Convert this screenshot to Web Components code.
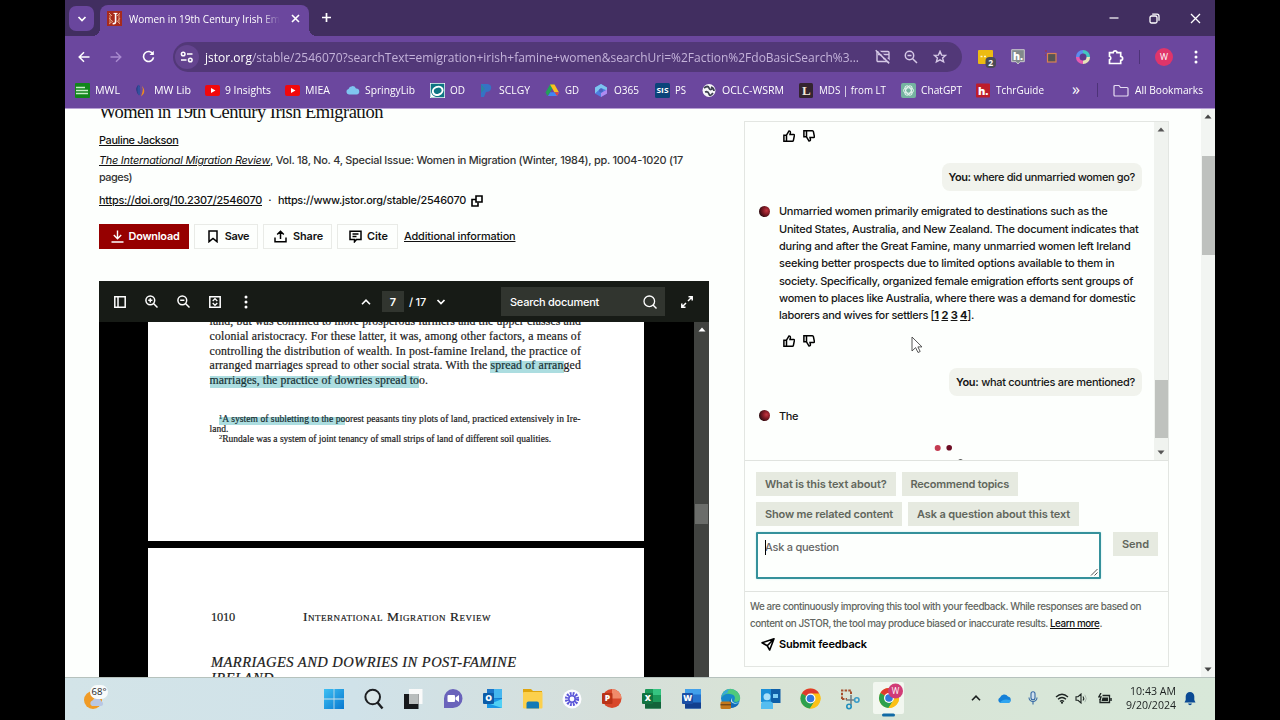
<!DOCTYPE html>
<html lang="en">
<head>
<meta charset="utf-8">
<title>Women in 19th Century Irish Emigration</title>
<style>
    body {
        margin: 0;
        background: #000;
        width: 1280px;
        height: 720px;
        overflow: hidden;
        display: flex;
        justify-content: center;
    }
</style>
</head>
<body>
<app-window></app-window>

<script>
const UI_FONT = `"Open Sans", "Noto Sans", sans-serif`;
const PAGE_FONT = `Inter, "Liberation Sans", sans-serif`;
const SERIF_FONT = `"Liberation Serif", serif`;

const CHROME_LOGO = `
    <circle cx="10.5" cy="10.5" r="10" fill="#fbc116"/>
    <path d="M10.5 10.5L1.8 5.5A10 10 0 0 1 19.2 5.5z" fill="#df3a2e"/>
    <path d="M10.5 10.5L1.8 5.5A10 10 0 0 0 10 20.5L14.8 13z" fill="#2da04e"/>
    <path d="M10.5 5.5H19.2A10 10 0 0 1 10 20.5L14.8 13z" fill="#fbc116"/>
    <circle cx="10.5" cy="10.5" r="5" fill="#fff"/>
    <circle cx="10.5" cy="10.5" r="3.8" fill="#3277dd"/>`;

// name: [width, height, markup]
const ICONS = {
    chevron: [10, 6, `<path d="M1.5 1L5 4.6 8.5 1" fill="none" stroke="currentColor" stroke-width="1.7"/>`],
    caretUp: [10, 6, `<path d="M1 5.2L5 1.2 9 5.2" fill="none" stroke="currentColor" stroke-width="1.6"/>`],
    arrowUp: [8, 5, `<path d="M4 0.5L7.5 4.5H0.5z" fill="currentColor"/>`],
    arrowDown: [8, 5, `<path d="M4 4.5L7.5 0.5H0.5z" fill="currentColor"/>`],
    close: [9, 9, `<path d="M1 1l7 7M8 1L1 8" stroke="#fff" stroke-width="1.6"/>`],
    winClose: [11, 11, `<path d="M1 1l9 9M10 1L1 10" stroke="#fff" stroke-width="1.3"/>`],
    plus: [11, 11, `<path d="M5.5 1v9M1 5.5h9" stroke="#fff" stroke-width="1.7"/>`],
    minimize: [10, 2, `<path d="M0.5 1h9" stroke="#fff" stroke-width="1.2"/>`],
    restore: [11, 11, `<rect x="1" y="3" width="7" height="7" rx="1.5" fill="none" stroke="#fff" stroke-width="1.3"/><path d="M3.2 1.2H8A2 2 0 0 1 10 3.2V7.8" fill="none" stroke="#fff" stroke-width="1.3"/>`],
    jstor: [15, 15, `<rect width="15" height="15" fill="#a72a1c"/><path d="M2 2l3 3M2 7l3 3M2 13l4-3M13 2l-3 3M13 7l-3 4M13 13l-2-2M3 4v8M12 3v9" stroke="#e0a080" stroke-width="1"/><path d="M8.6 2v8.5q0 2.5-3 2" fill="none" stroke="#fff" stroke-width="1.6"/><path d="M6.5 2.4h4" stroke="#fff"/>`],
    back: [12, 12, `<path d="M11.5 6H1.5M6 1.2L1.2 6 6 10.8" fill="none" stroke="#fff" stroke-width="1.5"/>`],
    forward: [12, 12, `<path d="M0.5 6H10.5M6 1.2L10.8 6 6 10.8" fill="none" stroke="#a98bd0" stroke-width="1.4"/>`],
    reload: [13, 13, `<path d="M11 4.2A5 5 0 1 0 11.5 7.3" fill="none" stroke="#fff" stroke-width="1.6"/><path d="M11.8 0.8V5H7.5z" fill="#fff"/>`],
    tune: [14, 12, `<g fill="none" stroke="#fff" stroke-width="1.5"><circle cx="3.2" cy="3" r="1.8"/><path d="M7 3h5.5M1 9h5.5"/><circle cx="10.3" cy="9" r="1.8"/></g>`],
    noCard: [16, 15, `<g fill="none" stroke="#d5c8e6" stroke-width="1.4"><rect x="2" y="2.5" width="12" height="10" rx="1"/><path d="M3 5.5h11M8 9.5h6"/></g><path d="M2 0l13.5 13.5" stroke="#523878" stroke-width="1.6"/><path d="M0.7 1.2l13.5 13.2" stroke="#d5c8e6" stroke-width="1.5"/>`],
    zoomMinus: [14, 14, `<g fill="none" stroke="#d5c8e6" stroke-width="1.5"><circle cx="5.5" cy="5.5" r="4.2"/><path d="M8.7 8.7l4.3 4.3M3.5 5.5h4"/></g>`],
    star: [14, 14, `<path d="M7 1.4l1.6 3.7 4 .3-3 2.6 1 3.9L7 9.8l-3.6 2.1 1-3.9-3-2.6 4-.3z" fill="none" stroke="#d5c8e6" stroke-width="1.4"/>`],
    noteExt: [18, 20, `<rect x="0" y="2" width="15" height="14" rx="1" fill="#edbb12"/><path d="M2.5 8.5h2M6 8.500h2" stroke="#fff5c0" stroke-width="1.5"/><rect x="7.5" y="9" width="10.5" height="11" rx="4" fill="#4a4a55"/><text x="10.2" y="18" font-size="8.5" font-weight="700" fill="#fff">2</text>`],
    hExt: [14, 16, `<path d="M0.7 0.7h12.6v12H9L7 15l-2-2.3H0.7z" fill="#828a8c" stroke="#c9c9cc" stroke-width="1"/><text x="2" y="10.5" font-size="10.5" font-weight="800" fill="#fff">h.</text>`],
    squareExt: [12, 13, `<rect x="2.5" y="3.5" width="8.5" height="8.5" fill="#555" stroke="#d98252" stroke-width="1.2"/><path d="M0 1h2M0 4v2" stroke="#b0342f"/>`],
    ringExt: [16, 16, `<g fill="none" stroke-width="3.6"><path d="M8 2.700A5.300 5.300 0 0 1 13.3 8" stroke="#42c6c0"/><path d="M13.3 8A5.3 5.3 0 0 1 8 13.3" stroke="#e8e3b8"/><path d="M8 13.3A5.3 5.3 0 0 1 2.7 8" stroke="#e55bb0"/><path d="M2.7 8A5.3 5.3 0 0 1 8 2.7" stroke="#5c8cf0"/></g><circle cx="8" cy="8" r="3.2" fill="#5b3a8c"/>`],
    puzzle: [16, 16, `<path d="M1.5 3.7h3.7a1.9 1.9 0 0 1 3.8 0h3.7v3.8a1.9 1.9 0 0 1 0 3.8v3.2H1.5v-3.6a1.9 1.9 0 0 0 0-3.6z" fill="none" stroke="#fff" stroke-width="1.7"/>`],
    userW: [18, 18, `<circle cx="9" cy="9" r="9" fill="#e0356a"/><text x="5" y="12.4" font-size="9" fill="#fff" textLength="8" lengthAdjust="spacingAndGlyphs">W</text>`],
    dots: [4, 14, `<g fill="currentColor"><circle cx="2" cy="2" r="1.5"/><circle cx="2" cy="7" r="1.5"/><circle cx="2" cy="12" r="1.5"/></g>`],

    // bookmarks
    mwl: [15, 15, `<rect width="15" height="15" rx="1" fill="#11851b"/><path d="M1 4.5h9M1 7.5h12M1 10.5h12" stroke="#c5eec5" stroke-width="1.5"/>`],
    mwlib: [15, 15, `<path d="M4 2Q0 7 5 12.5Q3 7 6 3z" fill="#283a80"/><path d="M4.500 1.500Q7 5 6 12.500L4 11Q2.500 6 4.500 1.500z" fill="#33509e"/><path d="M6 1Q11 4 7 13.500Q14 8 6 1z" fill="#ed8b20"/>`],
    youtube: [15, 15, `<rect y="2" width="15" height="11" rx="2" fill="#f1080c"/><path d="M6 5l4.5 2.5L6 10z" fill="#fff"/>`],
    cloud: [15, 15, `<path d="M4 11.5a2.8 2.8 0 0 1-.5-5.5 4 4 0 0 1 7.5-.5 3 3 0 0 1 .5 6z" fill="#7fc5f0"/>`],
    od: [15, 15, `<rect width="15" height="15" fill="#fff"/><rect x="0.7" y="0.7" width="13.600" height="13.600" fill="#0e7583"/><path d="M1 14V9q1 4 5 5z" fill="#fff"/><ellipse cx="7.7" cy="7.8" rx="5" ry="4" fill="none" stroke="#fff" stroke-width="2" transform="rotate(-22 7.700 7.800)"/>`],
    pear: [15, 15, `<path d="M2 1h7q4 1 3 5-1 3-5 3L5 14H2z" fill="#3573c4"/><path d="M2 1l4 5-4 4z" fill="#2a83a5"/>`],
    drive: [15, 15, `<path d="M5 1.5h4.5L5 9.5 2.5 13 0.5 9.500z" fill="#22a05a"/><path d="M5 1.5h4.5L14 9.5H9.5z" fill="#fbc11c"/><path d="M3 13l2.3-3.8h9L12 13z" fill="#4285f4"/><path d="M9.5 9.2h4.7L12 13z" fill="#e6453a"/>`],
    o365: [15, 15, `<path d="M7 1l6 3.5v6L7 14l-6-3.5v-6z" fill="#4d7de0"/><path d="M7 1l6 3.5v3L7 5 1 10.5v-6z" fill="#7dc4ee"/><path d="M7 14l6-3.5v-4L7 10z" fill="#b08af0"/><circle cx="7" cy="7.5" r="2" fill="#4a62c0"/>`],
    sis: [15, 15, `<rect width="15" height="15" rx="1.5" fill="#0b447a"/><text x="1.5" y="10.4" font-size="7.5" font-weight="700" fill="#fff" textLength="12" lengthAdjust="spacingAndGlyphs">SIS</text>`],
    globe: [15, 15, `<circle cx="7" cy="7.5" r="6.5" fill="#f6f6f8"/><path d="M2 5q4-3 5 0t4 0M3 9q3-1 4 2t4-1M9 4q3 1 3 4" fill="none" stroke="#3d4150" stroke-width="1.8"/>`],
    lt: [15, 15, `<rect width="14" height="15" rx="1.5" fill="#33242f"/><text x="3" y="12.3" font-family="Liberation Serif" font-size="13" font-weight="700" fill="#f3ead8">L</text>`],
    gpt: [15, 15, `<rect width="15" height="15" rx="2" fill="#75b3a0"/><g fill="none" stroke="#e6f5f0" stroke-width="1"><ellipse cx="7.5" cy="7.5" rx="5" ry="2.7"/><ellipse cx="7.5" cy="7.5" rx="5" ry="2.7" transform="rotate(60 7.5 7.5)"/><ellipse cx="7.5" cy="7.5" rx="5" ry="2.7" transform="rotate(120 7.5 7.5)"/></g>`],
    hRed: [15, 15, `<rect width="14" height="14" y="0.5" rx="1" fill="#bd1c2b"/><text x="2" y="11.7" font-size="11" font-weight="800" fill="#fff">h.</text>`],
    folder: [16, 13, `<path d="M1 2.5a1 1 0 0 1 1-1h4l1.5 2H14a1 1 0 0 1 1 1V11a1 1 0 0 1-1 1H2a1 1 0 0 1-1-1z" fill="none" stroke="#e6dcf2" stroke-width="1.2"/>`],

    // article and viewer
    copy: [12, 12, `<g fill="none" stroke="#000" stroke-width="1.6"><path d="M5 1h6v6H5z"/><path d="M5 4.5H1V11h6V7.5"/></g>`],
    download: [13, 13, `<path d="M6.5 0.5v8M2.8 5l3.7 3.7L10.2 5M0.5 12h12" fill="none" stroke="#fff" stroke-width="1.4"/>`],
    save: [10, 13, `<path d="M1 1h8v10.7L5 8.4 1 11.7z" fill="none" stroke="#000" stroke-width="1.5"/>`],
    share: [13, 13, `<path d="M6.5 9V1.5M3.2 4.5l3.3-3.3 3.3 3.3M1 7.5v4.3h11V7.5" fill="none" stroke="#000" stroke-width="1.5"/>`],
    cite: [13, 13, `<path d="M1 1.200h11v8.300H7.5L5.5 11.8V9.5H1zM3.5 4h6M3.5 6.5h4" fill="none" stroke="#000" stroke-width="1.5"/>`],
    sidebar: [12, 12, `<path d="M0.8 0.8h10.4v10.4H0.8zM4 1v10" fill="none" stroke="#fff" stroke-width="1.5"/>`],
    zoomIn: [13, 13, `<g fill="none" stroke="#fff" stroke-width="1.5"><circle cx="5.3" cy="5.3" r="4.4"/><path d="M8.5 8.5L12.5 12.5M3.2 5.3h4.2M5.3 3.2v4.2"/></g>`],
    zoomOut: [13, 13, `<g fill="none" stroke="#fff" stroke-width="1.5"><circle cx="5.3" cy="5.3" r="4.4"/><path d="M8.5 8.5L12.5 12.5M3.2 5.3h4.2"/></g>`],
    fitPage: [12, 12, `<path d="M0.8 0.8h10.4v10.4H0.8z" fill="none" stroke="#fff" stroke-width="1.5"/><path d="M3.7 5L6 2.7 8.3 5M3.7 7L6 9.3 8.3 7" fill="none" stroke="#fff" stroke-width="1.3"/>`],
    search: [14, 14, `<circle cx="6.3" cy="6.3" r="5.3" fill="none" stroke="#fff" stroke-width="1.3"/><path d="M10 10l3.5 3.5" stroke="#fff" stroke-width="1.4"/>`],
    expand: [12, 12, `<path d="M7.5 0.8h3.7v3.7M11 1L7 5M4.5 11.2H0.8V7.5M1 11l4-4" fill="none" stroke="#fff" stroke-width="1.5"/>`],

    // chat
    thumbUp: [12, 12, `<path d="M3.5 5.2L6 0.9q1.6 0 1.4 1.8L7 4.6h3.9q.6 0 .5.8L10.4 10.3q-.2.9-1 .9H3.5zM3.5 5.2H0.9v6h2.6z" fill="none" stroke="#000" stroke-width="1.5"/>`],
    thumbDown: [12, 12, `<path d="M3.5 6.8L6 11.1q1.6 0 1.4-1.8L7 7.4h3.9q.6 0 .5-.8L10.4 1.7q-.2-.9-1-.9H3.5zM3.5 6.8H0.9v-6h2.6z" fill="none" stroke="#000" stroke-width="1.5"/>`],
    send: [14, 13, `<path d="M1 4.8L13 0.8 8.7 12 6.3 7.8z M6.3 7.8L13 0.8" fill="none" stroke="#000" stroke-width="1.6" stroke-linejoin="round"/>`],
    spinner: [30, 15, `<circle cx="3.7" cy="3" r="3" fill="#c43c51"/><circle cx="15.2" cy="2.8" r="2.8" fill="#6d0d24"/><circle cx="26.5" cy="17.3" r="3" fill="#222"/>`],
    pointer: [13, 18, `<path d="M1 1v14l3.6-3.4L7 16.5l2.2-1-2.3-4.6H11z" fill="#fff" stroke="#444" stroke-width="0.9"/>`],

    // taskbar
    weather: [28, 26, `<circle cx="11" cy="15" r="9" fill="#f09b26"/><path d="M10 21a3 3 0 0 1 .5-5.6 5 5 0 0 1 9 1.1 2.3 2.3 0 0 1-.5 4.5z" fill="#b9c7e4"/><rect x="8" y="0" width="18" height="14" rx="7" fill="#f8fbfb"/><text x="9.5" y="10.3" font-size="9.5" fill="#222" textLength="15" lengthAdjust="spacingAndGlyphs">68°</text>`],
    windows: [22, 22, `<linearGradient id="w" x2="1" y2="1"><stop stop-color="#3ec0f3"/><stop offset="1" stop-color="#0878d0"/></linearGradient><path d="M1 1h9.6v9.6H1zM11.4 1H21v9.6h-9.6zM1 11.4h9.6V21H1zM11.4 11.4H21V21h-9.6z" fill="url(#w)"/>`],
    taskSearch: [20, 22, `<circle cx="8.7" cy="9" r="7.3" fill="#dbe7e9" stroke="#1d1f22" stroke-width="2"/><path d="M13.5 14.5L18.5 20.5" stroke="#1d1f22" stroke-width="2.4"/>`],
    taskView: [20, 22, `<rect x="6" y="1" width="13.5" height="15" fill="#fafafa"/><rect x="1" y="6" width="14.5" height="15" fill="#17191c"/><rect x="6" y="6" width="9.5" height="10" fill="#b9bdbd"/>`],
    meet: [20, 21, `<path d="M10 1a9.3 9.3 0 0 1 0 19H1V10.5A9.3 9.3 0 0 1 10 1z" fill="#6a63bb"/><rect x="4.5" y="7" width="7.5" height="7" rx="1" fill="#fff"/><path d="M12.5 9.5l3.5-2.5v7l-3.5-2.5z" fill="#fff"/>`],
    outlook: [21, 21, `<rect x="5" y="1" width="15" height="11" fill="#1b75c9"/><rect x="12" y="1" width="8" height="9" fill="#45b6ef"/><path d="M5 10l15 1v9H5z" fill="#1997e6"/><path d="M20 11v9l-12-4z" fill="#50d0f5"/><rect x="1" y="5" width="11" height="11" rx="1" fill="#0c5ca8"/><text x="3.3" y="13.4" font-size="8.5" font-weight="800" fill="#fff">O</text>`],
    explorer: [21, 21, `<path d="M1 1h8l2 2h9v6H1z" fill="#e0a50c"/><rect x="1" y="4" width="19.5" height="16.5" rx="1" fill="#fcd04d"/><path d="M4.5 20.5V15.5q0-2 2-2h8.5q2 0 2 2v5z" fill="#1379b6"/>`],
    loom: [20, 20, `<circle cx="10" cy="10" r="9.5" fill="#fcfcff"/><circle cx="10" cy="10" r="5.3" fill="none" stroke="#5a55d8" stroke-width="3.6" stroke-dasharray="1.7 1.075"/><circle cx="10" cy="10" r="3.2" fill="none" stroke="#5a55d8" stroke-width="1.6"/>`],
    ppt: [21, 21, `<circle cx="11" cy="10.5" r="9.5" fill="#d8472a"/><path d="M11 1a9.5 9.5 0 0 1 9.5 9.5H11z" fill="#f08a6a"/><rect x="1" y="5" width="10.5" height="11" rx="1" fill="#b93318"/><text x="3.7" y="13.3" font-size="8.5" font-weight="800" fill="#fff">P</text>`],
    excel: [21, 21, `<rect x="4" y="1" width="16" height="19.5" rx="1" fill="#1b9a5a"/><rect x="12" y="1" width="8" height="6" fill="#35c481"/><rect x="4" y="14" width="16" height="6.5" fill="#12633a"/><rect x="1" y="5" width="11" height="11" rx="1" fill="#107340"/><text x="3.7" y="13.3" font-size="8.5" font-weight="800" fill="#fff">X</text>`],
    word: [21, 21, `<rect x="4" y="1" width="16" height="19.5" rx="1" fill="#2472cc"/><rect x="4" y="1" width="16" height="5.5" fill="#41a0ea"/><rect x="4" y="14.5" width="16" height="6" fill="#123f8e"/><rect x="1" y="5" width="11" height="11" rx="1" fill="#1a4fa5"/><text x="2.3" y="13.3" font-size="8.5" font-weight="800" fill="#fff">W</text>`],
    edge: [21, 22, `<circle cx="10.5" cy="10.5" r="9.5" fill="#1587ca"/><path d="M3 4Q10 -2 17 3.500 21 7 20 11.500 18 15 14 13.500 17 7 10 6 5 5 2 9z" fill="#4fc97c"/><path d="M1.500 8Q4 1 10.500 1q-3 1-3 4Q4 6 1.500 8z" fill="#36a8dc"/><path d="M11 10q-1 5 4 6.500 3 0 4.500-2Q17 19.500 11 20q-4-5 0-10z" fill="#1568b8"/><path d="M12.500 9.500q-2 3 1 5 3 1.500 6.500-1-3 3-7 1.500-4-2-.5-5.500z" fill="#e7f1ec"/><rect x="0.5" y="13.5" width="10.5" height="7.5" rx="1.5" fill="#c4781c"/><path d="M0.5 16.8h10.5" stroke="#55351a"/>`],
    people: [21, 21, `<rect x="1" y="1" width="13" height="13" fill="#1a8fd8"/><rect x="11" y="1" width="9.5" height="14" fill="#0e5fa8"/><rect x="13" y="6" width="5" height="4" fill="#7fd0f5"/><circle cx="7" cy="8.7" r="3.5" fill="#a7e0fa"/><path d="M1 21v-4.5q0-3 3-3h6q3 0 3 3V21z" fill="#54bdf0"/>`],
    chrome: [21, 21, CHROME_LOGO],
    snip: [21, 22, `<path d="M3 11V2.5h9V7" fill="none" stroke="#a6502e" stroke-width="2" stroke-dasharray="2.5 1.2"/><path d="M3 11h5" stroke="#a6502e" stroke-width="2" stroke-dasharray="2.5 1.2"/><path d="M12 7v10M7 12h9" stroke="#6f7d84" stroke-width="1.5"/><circle cx="10" cy="18.5" r="2.2" fill="none" stroke="#2190bd" stroke-width="1.6"/><circle cx="17.8" cy="12" r="2.2" fill="none" stroke="#3a9cc8" stroke-width="1.6"/>`],
    chromeActive: [34, 35, `<rect width="31" height="32" rx="2" fill="#f2f7f0"/><g transform="translate(5.5 5.5)">${CHROME_LOGO}</g><circle cx="22.5" cy="9" r="7.5" fill="#d13b76"/><text x="18.8" y="12.2" font-size="8.5" fill="#fff" textLength="7.5" lengthAdjust="spacingAndGlyphs">W</text><rect x="9" y="31.5" width="13" height="3" rx="1.5" fill="#116aa5"/>`],
    onedrive: [14, 11, `<path d="M3.5 10a3 3 0 0 1-.5-5.6A4.5 4.5 0 0 1 11 3.5 3.3 3.3 0 0 1 11 10z" fill="#1580d8"/><path d="M3 10Q5 5 13.5 7 13.5 10 11 10z" fill="#2fa5f0"/>`],
    mic: [10, 14, `<rect x="3" y="0.7" width="4" height="8" rx="2" fill="#cfe0ee" stroke="#3568a5" stroke-width="1.1"/><path d="M1 6.5a4 4 0 0 0 8 0M5 10.5V13.5" fill="none" stroke="#3568a5" stroke-width="1.1"/>`],
    wifi: [14, 11, `<g fill="none" stroke="#1d2422" stroke-width="1.3"><path d="M1 4q6-5.5 12 0M3 6.3q4-3.7 8 0M5 8.5q2-1.8 4 0"/></g><circle cx="7" cy="9.7" r="1.1" fill="#1d2422"/>`],
    sound: [12, 11, `<path d="M1 3.7h2L6 1v9L3 7.3H1z" fill="none" stroke="#1d2422" stroke-width="1.1"/><path d="M8 3.5q1.5 2 0 4" fill="none" stroke="#1d2422" stroke-width="1.1"/><path d="M9.8 1.8q3 3.7 0 7.4" fill="none" stroke="#a9b8ae" stroke-width="1"/>`],
    battery: [14, 11, `<path d="M4.500 2.500H11.500V9.500H2V6" fill="none" stroke="#1d2422" stroke-width="1.300"/><path d="M4.500 4.500h5.500v3.500H3.500z" fill="#1d2422"/><path d="M13 5v3" stroke="#1d2422" stroke-width="1.500"/><path d="M3 0L0.800 3.800H3L2 7" fill="none" stroke="#1d2422" stroke-width="1.300"/>`],
    bell: [12, 15, `<path d="M6 1a4.3 4.3 0 0 1 4.3 4.3V9L11.5 11.5H0.5L1.7 9V5.3A4.3 4.3 0 0 1 6 1z" fill="#0b4a94"/><path d="M4 12.5h4q-.5 1.7-2 1.7t-2-1.7z" fill="#0b4a94"/>`]
};

class UiIcon extends HTMLElement {
    connectedCallback() {
        const [w, h, markup] = ICONS[this.getAttribute('name')];
        this.attachShadow({ mode: 'open' }).innerHTML = `
            <style>
                :host { display: inline-flex; flex: none; font-family: ${UI_FONT}; letter-spacing: 0; }
                svg { display: block; }
            </style>
            <svg width="${w}" height="${h}" viewBox="0 0 ${w} ${h}">${markup}</svg>
        `;
    }
}

// One line of text fitted to the width in px given by "w".
// Spacing is used by default, "squeeze" scales the glyphs instead.
class FitLine extends HTMLElement {
    connectedCallback() {
        const root = this.attachShadow({ mode: 'open' });
        root.innerHTML = `
            <style>
                :host { display: inline-block; flex: none; white-space: nowrap; vertical-align: top; }
                span { display: inline-block; transform-origin: 0 50%; }
            </style>
            <span><slot></slot></span>
        `;
        const target = Number(this.getAttribute('w'));
        const span = root.querySelector('span');
        const natural = span.getBoundingClientRect().width;
        if (this.hasAttribute('squeeze')) {
            span.style.transform = `scaleX(${target / natural})`;
        } else {
            const count = this.textContent.trim().length;
            span.style.letterSpacing = `${(target - natural) / count}px`;
        }
        this.style.width = `${target}px`;
    }
}

// Base for the elements that only draw static markup
class ViewElement extends HTMLElement {
    connectedCallback() {
        this.attachShadow({ mode: 'open' });
        this.shadowRoot.innerHTML = `<style>${this.styles()}</style>${this.markup()}`;
    }
}

class AppWindow extends ViewElement {
    styles() {
        return `
            :host { display: flex; flex-direction: column; width: 1150px; height: 720px; background: #fdfffd; overflow: hidden; }
            main { height: 568px; display: flex; overflow: hidden; }
            article { width: 610px; margin-left: 34px; }
            chat-panel { margin: 12px 32px 0 35px; }
        `;
    }
    markup() {
        return `
            <browser-tabs></browser-tabs>
            <browser-toolbar></browser-toolbar>
            <bookmark-bar></bookmark-bar>
            <main>
                <article>
                    <article-header></article-header>
                    <pdf-viewer></pdf-viewer>
                </article>
                <chat-panel></chat-panel>
                <scroll-track start="47" size="99" style="--track:#f2f5f2;--thumb:#bec1be;--arrow:#444"></scroll-track>
            </main>
            <task-bar></task-bar>
        `;
    }
}

class ScrollTrack extends ViewElement {
    styles() {
        return `
            :host { display: flex; flex-direction: column; align-items: center; flex: none; width: 14px; box-sizing: border-box; padding: 5px 0; background: var(--track); color: var(--arrow); }
            i { flex: none; width: 13px; height: ${this.getAttribute('size')}px; margin-top: ${this.getAttribute('start') - 10}px; background: var(--thumb); }
            .end { margin-top: auto; }
        `;
    }
    markup() {
        return `
            <ui-icon name="arrowUp"></ui-icon>
            <i></i>
            ${this.hasAttribute('noend') ? '' : '<ui-icon class="end" name="arrowDown"></ui-icon>'}
        `;
    }
}

class BrowserTabs extends ViewElement {
    styles() {
        return `
            :host { display: flex; align-items: flex-start; height: 36px; background: #412e60; color: #fff; font: 11.4px/16px ${UI_FONT}; }
            .find { width: 25px; height: 25px; margin: 6px 6px 0 4px; border-radius: 7px; background: #69469d; display: flex; align-items: center; justify-content: center; }
            .tab { position: relative; display: flex; align-items: center; width: 209px; height: 31px; margin-top: 5px; box-sizing: border-box; padding: 0 10px 4px 7px; background: #6b479e; border-radius: 8px 8px 0 0; }
            .tab::before, .tab::after { content: ""; position: absolute; bottom: 0; width: 8px; height: 8px; }
            .tab::before { left: -8px; background: radial-gradient(circle at 0 0, transparent 8px, #6b479e 8px); }
            .tab::after { right: -8px; background: radial-gradient(circle at 100% 0, transparent 8px, #6b479e 8px); }
            .name { width: 151px; margin: 1px 11px 0 7px; -webkit-mask-image: linear-gradient(90deg, #000 132px, transparent 151px); mask-image: linear-gradient(90deg, #000 132px, transparent 151px); display: flex; }
            .plus { margin: 12px auto 0 12px; }
            .controls { display: flex; align-items: center; gap: 30px; height: 36px; padding-right: 14px; }
        `;
    }
    markup() {
        return `
            <div class="find"><ui-icon name="chevron"></ui-icon></div>
            <div class="tab">
                <ui-icon name="jstor"></ui-icon>
                <div class="name"><fit-line w="151" squeeze>Women in 19th Century Irish Em</fit-line></div>
                <ui-icon name="close"></ui-icon>
            </div>
            <ui-icon class="plus" name="plus"></ui-icon>
            <div class="controls">
                <ui-icon name="minimize"></ui-icon>
                <ui-icon name="restore"></ui-icon>
                <ui-icon name="winClose"></ui-icon>
            </div>
        `;
    }
}

class BrowserToolbar extends ViewElement {
    styles() {
        return `
            :host { display: grid; grid-template-columns: 38px 25px 45px 789px 40px 32px 33px 32px 34px 12px 38px 26px; align-items: center; justify-items: center; height: 41px; background: #6b479e; color: #fff; font: 13px/20px ${UI_FONT}; }
            .reload { margin-right: 4px; }
            .omnibox { justify-self: stretch; display: flex; align-items: center; height: 30px; border-radius: 15px; background: #523878; padding-left: 2px; }
            .site { width: 24px; height: 24px; border-radius: 50%; background: #64448f; display: flex; align-items: center; justify-content: center; margin-right: 6px; }
            .url { color: #c4b3da; margin-right: 16px; }
            .url b { color: #fff; font-weight: 400; }
            .zoom { margin: 0 15px 0 13px; }
            .note { margin: 3px 0 0 9px; }
            .rule { width: 1px; height: 14px; background: #4d3378; }
        `;
    }
    markup() {
        return `
            <ui-icon name="back"></ui-icon>
            <ui-icon name="forward"></ui-icon>
            <ui-icon class="reload" name="reload"></ui-icon>
            <div class="omnibox">
                <span class="site"><ui-icon name="tune"></ui-icon></span>
                <fit-line class="url" w="654" squeeze><b>jstor.org</b>/stable/2546070?searchText=emigration+irish+famine+women&amp;searchUri=%2Faction%2FdoBasicSearch%3...</fit-line>
                <ui-icon name="noCard"></ui-icon>
                <ui-icon class="zoom" name="zoomMinus"></ui-icon>
                <ui-icon name="star"></ui-icon>
            </div>
            <ui-icon class="note" name="noteExt"></ui-icon>
            <ui-icon name="hExt"></ui-icon>
            <ui-icon name="squareExt"></ui-icon>
            <ui-icon name="ringExt"></ui-icon>
            <ui-icon name="puzzle"></ui-icon>
            <span class="rule"></span>
            <ui-icon name="userW"></ui-icon>
            <ui-icon name="dots"></ui-icon>
        `;
    }
}

class BookmarkBar extends ViewElement {
    // [icon, label, label width, item width]
    get items() {
        return [
            ['mwl', 'MWL', 25, 59], ['mwlib', 'MW Lib', 37, 71], ['youtube', '9 Insights', 46, 80],
            ['youtube', 'MIEA', 25, 60], ['cloud', 'SpringyLib', 50, 85], ['od', 'OD', 15, 49],
            ['pear', 'SCLGY', 31, 66], ['drive', 'GD', 14, 49], ['o365', 'O365', 25, 61],
            ['sis', 'PS', 11, 47], ['globe', 'OCLC-WSRM', 62, 97], ['lt', 'MDS | from LT', 67, 102],
            ['gpt', 'ChatGPT', 41, 75], ['hRed', 'TchrGuide', 48, 96]
        ];
    }
    styles() {
        return `
            :host { display: flex; align-items: center; box-sizing: border-box; height: 32px; padding: 0 0 5px 10px; background: #6b479e; border-bottom: 1px solid #b7a0d4; color: #fff; font: 11.4px/16px ${UI_FONT}; }
            .item { display: flex; align-items: center; gap: 5px; flex: none; }
            .more { font-size: 16px; line-height: 12px; width: 9px; margin-bottom: 3px; }
            .rule { width: 1px; height: 14px; background: #4d3378; margin: 0 15px 0 16px; }
            .all { margin-left: 6px; }
        `;
    }
    markup() {
        return this.items.map(([icon, label, w, total]) => `
            <span class="item" style="width:${total}px"><ui-icon name="${icon}"></ui-icon><fit-line w="${w}" squeeze>${label}</fit-line></span>
        `).join('') + `
            <span class="more">»</span>
            <span class="rule"></span>
            <ui-icon name="folder"></ui-icon>
            <fit-line class="all" w="68" squeeze>All Bookmarks</fit-line>
        `;
    }
}

class ArticleHeader extends ViewElement {
    styles() {
        return `
            :host { display: flow-root; height: 172px; color: #111; font: 450 10.9px/17.4px ${PAGE_FONT}; }
            h1 { margin: -9px 0 0; height: 24px; font: 18.5px/24px ${SERIF_FONT}; }
            div { display: flex; align-items: center; }
            .author { height: 17px; margin-top: 8px; }
            .journal { flex-direction: column; align-items: flex-start; margin-top: 3px; color: #333; }
            .journal u { color: #111; font-style: italic; }
            .links { margin-top: 5px; height: 18px; }
            .links span { width: 16px; text-align: center; }
            .links ui-icon { margin-left: 5px; }
            .actions { margin-top: 14px; height: 25px; }
            .btn { box-sizing: border-box; height: 25px; border: 1px solid #e9ebe7; justify-content: center; font-weight: 600; color: #111; padding: 1px 0 0 2px; }
            .btn + .btn { margin-left: 5px; }
            .primary { background: #960000; border-color: #960000; color: #fff; }
            .more { margin: 1px 0 0 6px; }
        `;
    }
    markup() {
        return `
            <h1><fit-line w="284">Women in 19th Century Irish Emigration</fit-line></h1>
            <div class="author"><fit-line w="79.5"><u>Pauline Jackson</u></fit-line></div>
            <div class="journal">
                <fit-line w="584"><u>The International Migration Review</u>, Vol. 18, No. 4, Special Issue: Women in Migration (Winter, 1984), pp. 1004-1020 (17</fit-line>
                <fit-line w="33">pages)</fit-line>
            </div>
            <div class="links">
                <fit-line w="163"><u>https://doi.org/10.2307/2546070</u></fit-line>
                <span>·</span>
                <fit-line w="188">https://www.jstor.org/stable/2546070</fit-line>
                <ui-icon name="copy"></ui-icon>
            </div>
            <div class="actions">
                <div class="btn primary" style="width:90px;gap:5px"><ui-icon name="download"></ui-icon><fit-line w="51">Download</fit-line></div>
                <div class="btn" style="width:64px;gap:7px;padding-left:5px"><ui-icon name="save"></ui-icon><fit-line w="24.5">Save</fit-line></div>
                <div class="btn" style="width:69px;gap:6px"><ui-icon name="share"></ui-icon><fit-line w="30">Share</fit-line></div>
                <div class="btn" style="width:61px;gap:5px"><ui-icon name="cite"></ui-icon><fit-line w="21">Cite</fit-line></div>
                <fit-line class="more" w="111.5"><u>Additional information</u></fit-line>
            </div>
        `;
    }
}

class PdfViewer extends ViewElement {
    styles() {
        return `
            :host { display: flex; flex-direction: column; height: 396px; background: #000; color: #fff; font: 450 11px/18px ${PAGE_FONT}; }
            .bar { display: flex; align-items: center; flex: none; height: 41px; box-sizing: border-box; padding-left: 15px; background: #171b16; }
            .tools { display: flex; align-items: center; gap: 19px; width: 247px; }
            .tools ui-icon:last-child { margin-left: 4px; }
            .page-no { display: flex; justify-content: center; width: 22px; height: 21px; line-height: 22px; margin: 0 5px 0 11px; background: #31352f; font-weight: 600; }
            .total { font-weight: 500; margin-right: 10px; }
            .search { display: flex; align-items: center; justify-content: space-between; width: 164px; height: 29px; box-sizing: border-box; padding: 0 8px 0 9px; margin: 0 16px 0 55px; background: #31352f; }
            .view { display: flex; flex: 1; min-height: 0; }
            .pages { width: 496px; margin: 0 50px 0 49px; color: #1a1a1a; font-family: ${SERIF_FONT}; overflow: hidden; -webkit-text-stroke: 0.2px #1a1a1a; }
            .sheet { height: 219px; margin-bottom: 7px; background: #fff; box-sizing: border-box; padding-left: 61.5px; overflow: hidden; }
            .sheet + .sheet { padding: 61px 0 0 63px; }
            .para { display: flex; flex-direction: column; font-size: 11.8px; line-height: 14.8px; margin-top: -8px; }
            .notes { display: flex; flex-direction: column; font-size: 9.5px; line-height: 10.3px; margin-top: 26.5px; }
            .notes :nth-child(2) { margin-top: -1px; }
            .indent { margin-left: 9.5px; }
            sup { font-size: 6.5px; line-height: 0; vertical-align: 3px; }
            mark { color: #14383c; background: linear-gradient(transparent 3px, #acdde0 3px); padding-bottom: 1px; }
            .running { display: flex; font-size: 12.4px; line-height: 16px; }
            .running .journal { font-variant: small-caps; font-size: 13.5px; margin-left: 68px; }
            h2 { display: flex; flex-direction: column; margin: 29px 0 0; font: italic 14.5px/16px ${SERIF_FONT}; }
        `;
    }
    markup() {
        return `
            <div class="bar">
                <div class="tools">
                    <ui-icon name="sidebar"></ui-icon>
                    <ui-icon name="zoomIn"></ui-icon>
                    <ui-icon name="zoomOut"></ui-icon>
                    <ui-icon name="fitPage"></ui-icon>
                    <ui-icon name="dots"></ui-icon>
                </div>
                <ui-icon name="caretUp"></ui-icon>
                <span class="page-no">7</span>
                <fit-line class="total" w="17">/ 17</fit-line>
                <ui-icon name="chevron"></ui-icon>
                <div class="search"><fit-line w="89">Search document</fit-line><ui-icon name="search"></ui-icon></div>
                <ui-icon name="expand"></ui-icon>
            </div>
            <div class="view">
                <div class="pages">
                    <div class="sheet">
                        <div class="para">
                            <fit-line w="371.5">land, but was confined to more prosperous farmers and the upper classes and</fit-line>
                            <fit-line w="371.5">colonial aristocracy. For these latter, it was, among other factors, a means of</fit-line>
                            <fit-line w="371.5">controlling the distribution of wealth. In post-famine Ireland, the practice of</fit-line>
                            <fit-line w="371.5">arranged marriages spread to other social strata. With the <mark>spread of arran</mark>ged</fit-line>
                            <fit-line w="218.5"><mark>marriages, the practice of dowries spread to</mark>o.</fit-line>
                        </div>
                        <div class="notes">
                            <fit-line class="indent" w="361.5"><mark><sup>1</sup>A system of subletting to the po</mark>orest peasants tiny plots of land, practiced extensively in Ire-</fit-line>
                            <fit-line w="19">land.</fit-line>
                            <fit-line class="indent" w="332"><sup>2</sup>Rundale was a system of joint tenancy of small strips of land of different soil qualities.</fit-line>
                        </div>
                    </div>
                    <div class="sheet">
                        <div class="running"><fit-line w="24">1010</fit-line><fit-line class="journal" w="188">International Migration Review</fit-line></div>
                        <h2>
                            <fit-line w="305.5">MARRIAGES AND DOWRIES IN POST-FAMINE</fit-line>
                            <fit-line w="63">IRELAND</fit-line>
                        </h2>
                    </div>
                </div>
                <scroll-track noend start="182" size="20" style="--track:#414340;--thumb:#6b6d6a;--arrow:#fff;width:15px"></scroll-track>
            </div>
        `;
    }
}

class ChatBubble extends ViewElement {
    styles() {
        return `
            :host { display: flex; align-items: center; align-self: flex-end; height: 26px; margin-right: 12px; padding: 2px 7px 0; background: #f1f3ed; border-radius: 8px; }
        `;
    }
    markup() {
        return `<slot></slot>`;
    }
}

class ChatAnswer extends ViewElement {
    styles() {
        return `
            :host { display: flex; align-items: flex-start; gap: 9px; padding-left: 14px; }
            .ball { flex: none; width: 11px; height: 11px; margin-top: 2.5px; border-radius: 50%; background: radial-gradient(circle at 68% 42%, #c43540 0, #7a1822 40%, #1a0a0e 85%); }
            .lines { display: flex; flex-direction: column; }
        `;
    }
    markup() {
        return `<span class="ball"></span><div class="lines"><slot></slot></div>`;
    }
}

class ThumbRow extends ViewElement {
    styles() {
        return `:host { display: flex; gap: 8px; padding-left: 38px; }`;
    }
    markup() {
        return `<ui-icon name="thumbUp"></ui-icon><ui-icon name="thumbDown"></ui-icon>`;
    }
}

class ChatPanel extends ViewElement {
    styles() {
        return `
            :host { display: block; width: 425px; height: 546px; box-sizing: border-box; border: 1px solid #e3e6e2; color: #161616; font: 450 11px/17.33px ${PAGE_FONT}; flex: none; }
            .history { position: relative; display: flex; height: 338px; border-bottom: 1px solid #e0e3df; }
            .messages { flex: 1; display: flex; flex-direction: column; overflow: hidden; padding-top: 8px; }
            b { font-weight: 600; }
            a { font-weight: 700; text-decoration: underline; }
            chat-bubble { margin-top: 21px; }
            .first { margin-top: 12.6px; }
            .second { margin-top: 12px; }
            .rate { margin-top: 10.4px; }
            .loading { margin: 20px 0 0 189px; }
            .cursor { position: absolute; left: 166px; top: 214px; }
            .composer { height: 131px; box-sizing: border-box; padding: 11px 0 0 11px; border-bottom: 1px solid #e0e3df; }
            .row { display: flex; gap: 6px; margin-bottom: 6px; }
            .chip { display: flex; align-items: center; height: 22px; padding: 2px 9px 0; background: #e6eae0; color: #61665c; font-weight: 600; }
            .ask { display: flex; gap: 12px; align-items: flex-start; }
            .box { position: relative; box-sizing: border-box; width: 345px; height: 47px; padding: 5px 7px; border: 2px solid #35919b; border-radius: 1px; color: #666; box-shadow: 0 0 2px #bfe9ec; }
            .box i { position: absolute; left: 7px; top: 6px; width: 1px; height: 15px; background: #000; }
            .box svg { position: absolute; right: 1px; bottom: 1px; }
            .note { padding: 6px 0 0 5px; display: flex; flex-direction: column; color: #62665f; font-size: 9.9px; line-height: 17.4px; }
            .note a { font-weight: 500; color: #111; }
            .feedback { display: flex; align-items: center; gap: 4px; margin: 3px 0 0 16px; font-weight: 600; color: #000; }
        `;
    }
    markup() {
        return `
            <div class="history">
                <div class="messages">
                    <thumb-row></thumb-row>
                    <chat-bubble><fit-line w="186.5"><b>You:</b> where did unmarried women go?</fit-line></chat-bubble>
                    <chat-answer class="first">
                        <fit-line w="328.5">Unmarried women primarily emigrated to destinations such as the</fit-line>
                        <fit-line w="359.5">United States, Australia, and New Zealand. The document indicates that</fit-line>
                        <fit-line w="351.5">during and after the Great Famine, many unmarried women left Ireland</fit-line>
                        <fit-line w="335.5">seeking better prospects due to limited options available to them in</fit-line>
                        <fit-line w="354">society. Specifically, organized female emigration efforts sent groups of</fit-line>
                        <fit-line w="356.5">women to places like Australia, where there was a demand for domestic</fit-line>
                        <fit-line w="195">laborers and wives for settlers [<a>1</a> <a>2</a> <a>3</a> <a>4</a>].</fit-line>
                    </chat-answer>
                    <thumb-row class="rate"></thumb-row>
                    <chat-bubble><fit-line w="179"><b>You:</b> what countries are mentioned?</fit-line></chat-bubble>
                    <chat-answer class="second"><fit-line w="19">The</fit-line></chat-answer>
                    <ui-icon class="loading" name="spinner"></ui-icon>
                </div>
                <scroll-track start="258" size="58" style="--track:#f0f3ef;--thumb:#bfc2be;--arrow:#555"></scroll-track>
                <ui-icon class="cursor" name="pointer"></ui-icon>
            </div>
            <div class="composer">
                <div class="row">
                    <span class="chip"><fit-line w="121.5">What is this text about?</fit-line></span>
                    <span class="chip"><fit-line w="98.5">Recommend topics</fit-line></span>
                </div>
                <div class="row">
                    <span class="chip"><fit-line w="128">Show me related content</fit-line></span>
                    <span class="chip"><fit-line w="153">Ask a question about this text</fit-line></span>
                </div>
                <div class="ask">
                    <div class="box">
                        <fit-line w="74">Ask a question</fit-line><i></i>
                        <svg width="8" height="8"><path d="M1 7.5L7.5 1M4.5 7.5L7.5 4.5" stroke="#555" stroke-width="1"/></svg>
                    </div>
                    <span class="chip"><fit-line w="27">Send</fit-line></span>
                </div>
            </div>
            <div class="note">
                <fit-line w="391">We are continuously improving this tool with your feedback. While responses are based on</fit-line>
                <fit-line w="352">content on JSTOR, the tool may produce biased or inaccurate results. <a>Learn more</a>.</fit-line>
            </div>
            <div class="feedback"><ui-icon name="send"></ui-icon><fit-line w="88">Submit feedback</fit-line></div>
        `;
    }
}

class TaskBar extends ViewElement {
    get apps() {
        return ['windows', 'taskSearch', 'taskView', 'meet', 'outlook', 'explorer', 'loom', 'ppt',
            'excel', 'word', 'edge', 'people', 'chrome', 'snip'];
    }
    styles() {
        return `
            :host { display: flex; align-items: center; flex: none; height: 43px; box-sizing: border-box; border-top: 1px solid #b6c2bd; background: linear-gradient(90deg, #d3e4e8, #d0e2e9 25%, #d6dfda 48%, #d8e3d6 60%, #d8e8d9); color: #1c2020; font: 11.3px/14.5px ${UI_FONT}; }
            .weather { margin: 0 0 3px 17px; width: 232px; }
            .apps { display: grid; grid-template-columns: repeat(14, 39.7px); justify-items: center; align-items: center; margin-bottom: 1px; }
            .active { margin: 1px 0 0 3px; }
            .tray { display: flex; align-items: center; margin: 0 0 2px 64px; }
            .clock { display: flex; flex-direction: column; align-items: flex-end; margin: 0 8px 0 14px; }
        `;
    }
    markup() {
        return `
            <ui-icon class="weather" name="weather"></ui-icon>
            <div class="apps">${this.apps.map(name => `<ui-icon name="${name}"></ui-icon>`).join('')}</div>
            <ui-icon class="active" name="chromeActive"></ui-icon>
            <div class="tray">
                <ui-icon name="caretUp"></ui-icon>
                <ui-icon name="onedrive" style="margin-left:16px"></ui-icon>
                <ui-icon name="mic" style="margin-left:17px"></ui-icon>
                <ui-icon name="wifi" style="margin-left:17px"></ui-icon>
                <ui-icon name="sound" style="margin-left:6px"></ui-icon>
                <ui-icon name="battery" style="margin-left:11px"></ui-icon>
                <div class="clock"><fit-line w="46" squeeze>10:43 AM</fit-line><fit-line w="50" squeeze>9/20/2024</fit-line></div>
                <ui-icon name="bell"></ui-icon>
            </div>
        `;
    }
}

customElements.define('app-window', AppWindow);
customElements.define('browser-tabs', BrowserTabs);
customElements.define('browser-toolbar', BrowserToolbar);
customElements.define('bookmark-bar', BookmarkBar);
customElements.define('article-header', ArticleHeader);
customElements.define('pdf-viewer', PdfViewer);
customElements.define('chat-panel', ChatPanel);
customElements.define('chat-bubble', ChatBubble);
customElements.define('chat-answer', ChatAnswer);
customElements.define('thumb-row', ThumbRow);
customElements.define('scroll-track', ScrollTrack);
customElements.define('task-bar', TaskBar);
customElements.define('ui-icon', UiIcon);
// Last, so that every line is measured in its final place
customElements.define('fit-line', FitLine);
</script>
</body>
</html>
